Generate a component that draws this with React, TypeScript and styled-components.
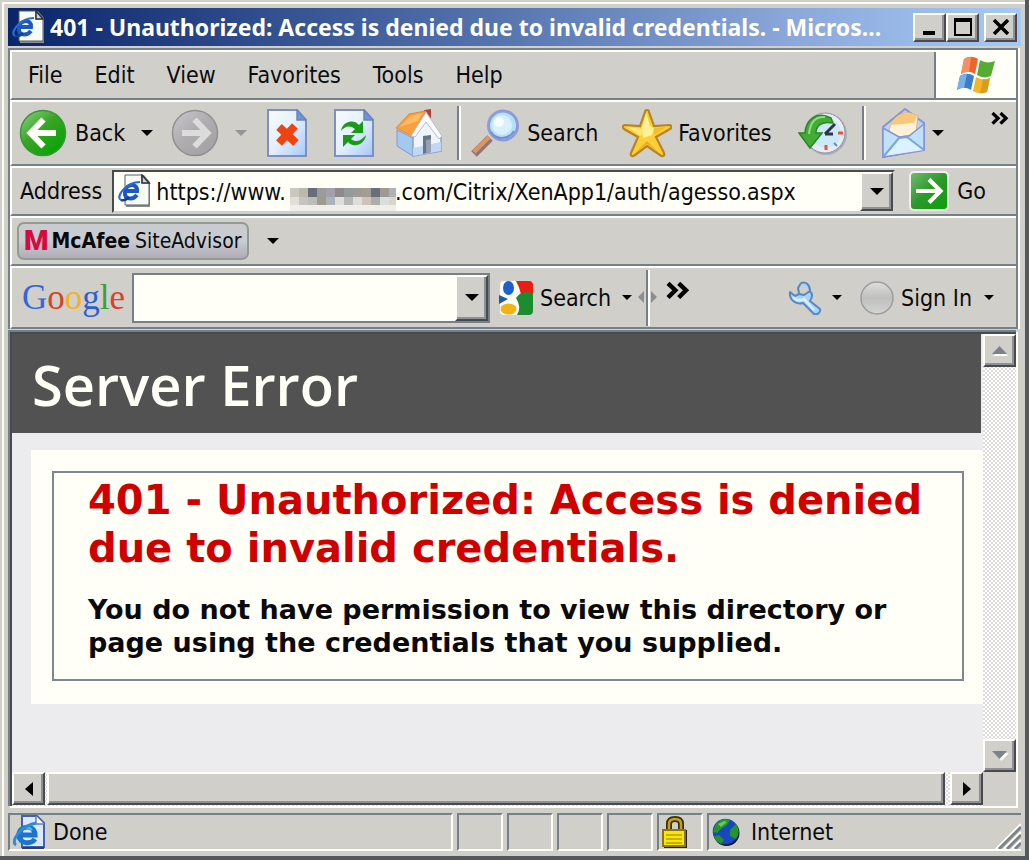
import React from "react";
import styled, { createGlobalStyle, css } from "styled-components";

const face = "#d1cfca";
const light = "#fffff8";
const shade = "#76808a";
const dark = "#484a4d";
const ui = `"DejaVu Sans Condensed", "DejaVu Sans", sans-serif`;
const verdana = `"DejaVu Sans", sans-serif`;

const Global = createGlobalStyle`
  *, *::before, *::after { box-sizing: border-box; }
  body { margin: 0; background: ${face}; }
  button, input { font: inherit; color: inherit; border: 0; padding: 0; background: none; border-radius: 0; }
  svg { display: block; flex: none; }
`;

const Window = styled.div`
  min-height: 100vh;
  display: flex;
  flex-direction: column;
  padding: 8px 8px 9px;
  background: ${face};
  box-shadow: inset -4px -4px 0 #54585c, inset 2px 2px 0 ${face}, inset 4px 4px 0 ${light};
  font: 23px/28px ${ui};
  color: #0a0a0c;
`;

const raised = css`
  background: ${face};
  border: 2px solid;
  border-color: ${light} ${dark} ${dark} ${light};
  box-shadow: inset -2px -2px 0 #8d9095;
`;

const TitleBar = styled.header`
  display: flex;
  align-items: center;
  height: 38px;
  padding: 0 4px;
  background: linear-gradient(90deg, #0a246a, #5574ae 48%, #8ca8dc 78%, #a6caf4);
`;

const TitleText = styled.h1`
  flex: 1;
  min-width: 0;
  margin: 0 0 0 5px;
  overflow: hidden;
  white-space: nowrap;
  font: bold 23px/34px "Noto Sans", sans-serif;
  color: ${light};
`;

const CaptionButton = styled.button<{ $apart?: boolean }>`
  ${raised}
  display: grid;
  place-items: center;
  flex: none;
  width: 33px;
  height: 29px;
  margin-left: ${(p) => (p.$apart ? 5 : 0)}px;
`;

const Rebar = styled.div`
  margin: 2px 3px 0 0;
  border: 2px solid ${shade};
  border-bottom: 0;
  box-shadow: 2px 0 0 ${light};
`;

const Band = styled.div<{ $h: number }>`
  display: flex;
  align-items: center;
  min-height: ${(p) => p.$h}px;
  border-top: 2px solid ${light};
  border-left: 2px solid ${light};
  border-bottom: 2px solid ${shade};
  white-space: nowrap;
`;

const MenuBand = styled(Band)`
  align-items: stretch;
`;

const MenuItem = styled.button`
  padding: 0 16px;
`;

const Throbber = styled.div`
  display: grid;
  place-items: center;
  width: 82px;
  margin-left: auto;
  background: ${light};
  border-left: 2px solid ${shade};
`;

const ToolButton = styled.button<{ $before?: number; $gap?: number }>`
  display: flex;
  align-items: center;
  flex: none;
  gap: ${(p) => p.$gap ?? 8}px;
  margin-left: ${(p) => p.$before ?? 0}px;
`;

const Divider = styled.span<{ $before: number }>`
  flex: none;
  width: 4px;
  height: 54px;
  margin-left: ${(p) => p.$before}px;
  border-left: 2px solid ${shade};
  border-right: 2px solid ${light};
`;

const Overflow = styled.button<{ $push?: boolean }>`
  align-self: flex-start;
  margin: ${(p) => (p.$push ? "10px 7px 0 auto" : "14px 0 0")};
`;

const AddressLabel = styled.label`
  margin: 0 10px 0 8px;
`;

const Combo = styled.div<{ $h: number }>`
  position: relative;
  display: flex;
  align-items: center;
  height: ${(p) => p.$h}px;
  background: ${light};
  border: 2px solid;
  border-color: ${dark} ${face} ${face} ${dark};
`;

const AddressCombo = styled(Combo)`
  flex: 1;
  padding-left: 4px;
`;

const SearchCombo = styled(Combo)`
  width: 358px;
  margin-left: 9px;
  border-color: ${shade};
`;

const ComboInput = styled.input`
  flex: 1;
  min-width: 0;
  height: 100%;
  margin-left: 5px;
  padding-top: 2px;
  outline: 0;
`;

const DropButton = styled.button`
  ${raised}
  display: grid;
  place-items: center;
  align-self: stretch;
  width: 33px;
`;

const Redaction = styled.svg`
  position: absolute;
  left: 176px;
  top: 16px;
`;

const SiteAdvisor = styled.button`
  display: flex;
  align-items: center;
  height: 38px;
  margin-left: 5px;
  padding: 0 6px 0 5px;
  border: 2px solid #929a94;
  border-radius: 7px;
  background: linear-gradient(#c8cccf, #c9ccd0 50%, #b0acb8);
  font: 21px/28px ${ui};
`;

const AdvisorMark = styled.span`
  font: 900 28px/30px Roboto, sans-serif;
  color: #d8093f;
`;

const AdvisorName = styled.strong`
  margin: 0 5px 0 3px;
  font: bold 21px/28px ${ui};
`;

const GoogleMark = styled.a`
  margin-left: 10px;
  width: 101px;
  font: 35px/44px "Liberation Serif", serif;
  text-decoration: none;
`;

const Tint = styled.span<{ $c: string }>`
  color: ${(p) => p.$c};
`;

const Spacer = styled.span<{ $w?: number }>`
  flex: ${(p) => (p.$w ? "none" : "1")};
  width: ${(p) => p.$w ?? 0}px;
`;

const Grip = styled.svg`
  margin: 0 9px 0 5px;
`;

const View = styled.main`
  flex: 1;
  display: grid;
  grid-template-columns: minmax(0, 1fr) 33px;
  grid-template-rows: 1fr 34px;
  margin: 1px 5px 0 0;
  border-top: 2px solid ${shade};
  border-left: 2px solid ${shade};
  box-shadow: inset 2px 2px 0 ${dark}, 2px 2px 0 ${light};
  padding: 2px 0 0 2px;
`;

const Page = styled.section`
  background: #ececee;
  font-family: ${verdana};
`;

const PageHeader = styled.div`
  margin-right: 2px;
  padding: 18px 20px 17px;
  background: #525252;
  color: ${light};
`;

const PageTitle = styled.h1`
  margin: 0;
  font: 600 56px/64px "Open Sans", sans-serif;
`;

const Panel = styled.div`
  margin: 17px 0 0 19px;
  padding: 21px 19px 23px 21px;
  background: ${light};
`;

const ErrorBox = styled.div`
  border: 2px solid #7d8891;
  padding: 3px 20px 20px 34px;
`;

const ErrorTitle = styled.h2`
  margin: 0;
  font: bold 40px/48px ${verdana};
  color: #d00000;
`;

const ErrorText = styled.h3`
  margin: 21px 0 0;
  font: bold 27px/33px ${verdana};
`;

const track = css`
  background: repeating-conic-gradient(${light} 0% 25%, #dcdce0 0% 50%) 0 0 / 4px 4px;
`;

const VScroll = styled.div`
  ${track}
  display: flex;
  flex-direction: column;
  justify-content: space-between;
`;

const HScroll = styled.div`
  ${track}
  display: flex;
  gap: 2px;
`;

const ScrollButton = styled.button`
  ${raised}
  display: grid;
  place-items: center;
  flex: none;
  width: 33px;
  height: 33px;
`;

const Thumb = styled.div`
  ${raised}
  flex: 1;
  height: 33px;
  margin-right: 3px;
`;

const StatusBar = styled.footer`
  display: flex;
  gap: 4px;
  height: 38px;
  margin-top: 7px;
`;

const StatusCell = styled.div<{ $w?: number; $grow?: number }>`
  display: flex;
  align-items: center;
  flex: ${(p) => (p.$grow ? `${p.$grow} 1 0` : "none")};
  width: ${(p) => (p.$w ? `${p.$w}px` : "auto")};
  padding-left: 3px;
  gap: 8px;
  border: 2px solid;
  border-color: ${shade} ${light} ${light} ${shade};
`;

const ZoneCell = styled(StatusCell)`
  flex: none;
  width: 314px;
  gap: 11px;
  border-right: 0;
`;

const ResizeGrip = styled.svg`
  margin-left: auto;
  align-self: flex-end;
`;

const Arrow = ({ w = 12, c = "#000" }: { w?: number; c?: string }) => (
  <svg width={w} height={w / 2} viewBox="0 0 12 6"><path d="M0 0h12L6 6z" fill={c} /></svg>
);

const Chevrons = ({ w = 18 }: { w?: number }) => (
  <svg width={w} height={w * 0.7} viewBox="0 0 18 12.6">
    <path d="M1.500 1l5.500 5.200L1.500 11.600M9.500 1l5.500 5.200-5.500 5.400" fill="none" stroke="#000" strokeWidth="3.300" />
  </svg>
);

const IePage = () => (
  <svg width="33" height="34" viewBox="0 0 33 34">
    <path d="M8 1h18l6 7v25H8z" fill="#8a8e90" />
    <path d="M7 1h17v8h7v22H7z" fill="#f8faf6" stroke="#55616a" strokeWidth="1" />
    <path d="M24 1l7 8h-7z" fill="#cfd4d4" stroke="#30363a" strokeWidth="1.600" />
    <path d="M7 17h12c1-8-11-8-12 1-1 8 8 8 12 3" fill="none" stroke="#1c58c4" strokeWidth="4" />
    <path d="M3 26c-6-3 5-18 19-18" fill="none" stroke="#2a6cd8" strokeWidth="2.200" />
    <path d="M3 26c3 1 7-1 8-3" fill="none" stroke="#143c90" strokeWidth="2.500" />
  </svg>
);

const IeStatus = () => (
  <svg width="32" height="34" viewBox="0 0 32 34">
    <path d="M9 1h15l7 7v24H9z" fill="#dce8fc" stroke="#4460a8" strokeWidth="2" />
    <path d="M23 1v8h8" fill="#fff" stroke="#5c7cc4" strokeWidth="1.500" />
    <path d="M9 33h22" stroke="#343c74" strokeWidth="2" />
    <path d="M6 20h16c0-11-16-10-16 0 0 10 13 9 16 4" fill="none" stroke="#1c74cc" strokeWidth="5" />
    <path d="M6 19c1-7 10-8 13-4" fill="none" stroke="#5cbcf4" strokeWidth="2" />
    <path d="M3 30C-3 26 8 11 23 8" fill="none" stroke="#2c8cdc" strokeWidth="3" />
  </svg>
);

const RoundArrow = ({ on }: { on?: boolean }) => {
  const id = on ? "goRound" : "offRound";
  return (
    <svg width="48" height="48" viewBox="0 0 48 48">
      <defs>
        <linearGradient id={id} x1="0.1" y1="0.1" x2="0.8" y2="0.9">
          <stop offset="0" stopColor={on ? "#7cc874" : "#c4c2c4"} />
          <stop offset="0.45" stopColor={on ? "#38a424" : "#b0aeb0"} />
          <stop offset="1" stopColor={on ? "#08a408" : "#a4a2a4"} />
        </linearGradient>
      </defs>
      <circle cx="24" cy="24" r="22.5" fill={`url(#${id})`} stroke={on ? "#3c9438" : "#918f93"} strokeWidth="1.5" />
      <g transform={on ? undefined : "matrix(-1 0 0 1 48 0)"} fill="none" stroke={on ? "#fffff8" : "#dddcdc"} strokeWidth="6">
        <path d="M24.500 10.500L11.500 24l13 13.500M12 24h25" />
      </g>
    </svg>
  );
};

const Sheet = ({ children }: { children: React.ReactNode }) => (
  <svg width="40" height="48" viewBox="0 0 40 48">
    <defs>
      <linearGradient id="sheet" x1="0" y1="0" x2="1" y2="1">
        <stop offset="0" stopColor="#f8fcff" /><stop offset="0.5" stopColor="#e4f0fc" /><stop offset="1" stopColor="#a4c8f8" />
      </linearGradient>
    </defs>
    <path d="M1 1h29l9 10v36H1z" fill="url(#sheet)" stroke="#7c90c4" strokeWidth="2" />
    <path d="M30 1v10h9z" fill="#6c94d8" stroke="#6c84bc" strokeWidth="1.5" />
    {children}
  </svg>
);

const Home = () => (
  <svg width="48" height="50" viewBox="0 0 48 50">
    <path d="M29 2l7-1v14l-7-6z" fill="#b83c34" />
    <path d="M2 22l16 8v18L2 38z" fill="#a4c8f0" stroke="#7c9cd0" />
    <path d="M18 27L32 11l14 18v14l-28 5z" fill="#f0f4fc" stroke="#8ca4d0" strokeWidth="1.5" />
    <path d="M18 40l28-6v9l-28 5z" fill="#c0d8f4" />
    <path d="M1 20L14 6l17-3-14 25z" fill="#f8a040" stroke="#e4883c" />
    <path d="M4 19L16 8l11-3-4 8z" fill="#fcbc64" />
    <path d="M31 4l16 24-3 3-13-17-11 15-4-1z" fill="#fafcfc" stroke="#b4bccc" />
    <path d="M28 28l8-1v17l-8 2z" fill="#66748c" /><path d="M31 32l5-1v13l-5 1z" fill="#96a0b0" />
  </svg>
);

const Magnifier = () => (
  <svg width="48" height="50" viewBox="0 0 48 50">
    <path d="M3 46L19 30" stroke="#8c7480" strokeWidth="8" />
    <path d="M3 44L18 29" stroke="#e0955c" strokeWidth="4.5" />
    <circle cx="32" cy="17.5" r="14.5" fill="#b4e0f8" stroke="#8c9cd8" strokeWidth="3" />
    <circle cx="31" cy="17" r="10" fill="#d8f0fc" /><circle cx="28" cy="14" r="5" fill="#f4fcff" />
    <path d="M20 24c5 8 18 8 23-1" fill="none" stroke="#7c8ad0" strokeWidth="2" />
  </svg>
);

const Star = () => (
  <svg width="50" height="50" viewBox="0 0 50 50">
    <path d="M25 2c1 0 2 1 2 2l5 14 15-1c3 0 3 3 1 4L34 29l8 16c1 3-1 4-4 2L25 38 13 47c-3 2-5 1-4-2l7-16L2 21c-2-2-1-4 1-4l15 1 5-14c0-1 1-2 2-2z" fill="#fbcf38" stroke="#b78524" strokeWidth="2.2" />
    <path d="M24 5l-4 15 1 10 9-3 2-7-4-2z" fill="#fff09a" /><path d="M25 33l11 11-11-8-11 8z" fill="#efaa1c" />
    <path d="M5 19l16 2-2 7z" fill="#fee878" /><path d="M32 20l12-1-12 8z" fill="#f6bc28" />
  </svg>
);

const History = () => (
  <svg width="50" height="48" viewBox="0 0 50 48">
    <circle cx="28" cy="25" r="21" fill="#a9afb9" /><circle cx="27" cy="24" r="20" fill="#e8ecf0" stroke="#8c98a8" />
    <circle cx="28" cy="24" r="15" fill="#cbe9fa" />
    <path d="M27 25l10-10M27 25h8" stroke="#303848" strokeWidth="3" />
    <path d="M28 36v5M40 24h5" stroke="#e8542c" strokeWidth="3" />
    <path d="M36 34l3 3" stroke="#7088a8" strokeWidth="2" />
    <path d="M33 9C19 2 8 10 7 24H1l11 15 12-15h-6c0-7 5-12 17-10z" fill="#42ac34" stroke="#2c8428" strokeWidth="1.5" />
    <path d="M27 8C17 7 12 14 11 25" fill="none" stroke="#90dc80" strokeWidth="2" />
  </svg>
);

const Mail = () => (
  <svg width="43" height="50" viewBox="0 0 43 50">
    <path d="M1 19L23 1l19 14v27L1 49z" fill="#b9d5f6" stroke="#8894d0" strokeWidth="2" />
    <path d="M7 22C11 8 22 0 36 8l-2 18-22 4z" fill="#fff0d8" stroke="#dcac74" />
    <path d="M8 17C14 6 24 2 35 8l-3 7z" fill="#f8c878" />
    <path d="M1 20l16 9 10-1 15-12v26L1 49z" fill="#bfe2fa" stroke="#8894d0" strokeWidth="1.5" />
    <path d="M2 48l15-18 8-1 17 13" fill="#dcf2ff" stroke="#7da4dc" strokeWidth="2" />
  </svg>
);

const Flag = () => (
  <svg width="40" height="38" viewBox="0 0 40 38">
    <path d="M8 3c5-3 9-3 14 0l-3 15c-5-3-9-3-14 0z" fill="#f0642c" /><path d="M8 3c3-2 5-2 7-2l-2 15c-3 0-5 0-8 2z" fill="#f49068" />
    <path d="M24 4c5 3 10 3 15 1l-4 15c-5 2-9 2-14-1z" fill="#54ac34" />
    <path d="M4 20c5-3 9-3 14 0l-3 14c-5-3-9-3-14 0z" fill="#3c7ccc" /><path d="M4 20c3-2 5-2 7-2L8 32c-3 0-5 0-7 2z" fill="#78b0e8" />
    <path d="M20 21c5 3 10 3 14 1l-3 14c-5 2-9 2-14-1z" fill="#f0b824" /><path d="M27 23c3 1 5 0 7-1l-3 14c-2 1-5 1-7 1z" fill="#d89c20" />
  </svg>
);

const GoIcon = () => (
  <svg width="40" height="40" viewBox="0 0 40 40">
    <defs><linearGradient id="go" x1="0" y1="0" x2="1" y2="1"><stop offset="0" stopColor="#74bc74" /><stop offset="0.5" stopColor="#2c982c" /><stop offset="1" stopColor="#08a008" /></linearGradient></defs>
    <rect x="1" y="1" width="38" height="38" rx="4" fill="url(#go)" stroke="#eef4ea" strokeWidth="2" />
    <path d="M7 20h24M20 8.500L31.500 20 20 31.500" fill="none" stroke={light} strokeWidth="4.2" />
  </svg>
);

const GoogleIcon = () => (
  <svg width="34" height="34" viewBox="0 0 34 34">
    <rect x="1" width="33" height="34" rx="4" fill="#fbfbf6" />
    <path d="M17 0h13q4 0 4 4v9H22Q20 5 17 0z" fill="#ec1c14" />
    <path d="M17 17q4-6 10-6l7 1v18q0 4-4 4H18q5-8-1-17z" fill="#1c8c30" />
    <path d="M0 14l9 4-9 5z" fill="#2454b0" />
    <ellipse cx="9.5" cy="7" rx="5.5" ry="7" fill="#1c60d0" />
    <ellipse cx="9.5" cy="28" rx="8" ry="5.5" fill="#f2b414" />
  </svg>
);

const Wrench = () => (
  <svg width="34" height="34" viewBox="0 0 34 34">
    <path d="M13 2l-3 5 1 6 5 1 6-4c3 3 2 7 0 10l10 8c1 4-3 6-6 5L15 22C8 24 1 19 2 11l5 4 4-2M13 2c5-2 9 2 9 8" fill="#a8d4f8" stroke="#5888c4" strokeWidth="2" strokeLinejoin="round" />
    <path d="M5 16c3 4 8 4 11 2l10 11" fill="none" stroke="#d8f0ff" strokeWidth="2.5" />
  </svg>
);

const Avatar = () => (
  <svg width="34" height="34" viewBox="0 0 34 34">
    <defs><linearGradient id="av" x1="0" y1="0" x2="0" y2="1"><stop offset="0" stopColor="#dededc" /><stop offset="0.5" stopColor="#bfc0be" /><stop offset="1" stopColor="#d4d5d2" /></linearGradient></defs>
    <circle cx="17" cy="17" r="16" fill="url(#av)" stroke="#9b9c9e" strokeWidth="1.5" />
  </svg>
);

const Lock = () => (
  <svg width="26" height="32" viewBox="0 0 26 32">
    <path d="M7 15V8q0-5 6-5t6 5v7" fill="none" stroke="#3b3008" strokeWidth="6" />
    <path d="M7 15V8q0-5 6-5t6 5v7" fill="none" stroke="#c4a020" strokeWidth="2.5" />
    <rect x="2" y="14" width="23" height="18" fill="#282004" /><rect x="1" y="14" width="22" height="16" fill="#f8e800" stroke="#8c7410" strokeWidth="2" />
    <path d="M4 19h16M4 23h16M4 27h16" stroke="#b89c10" strokeWidth="1.5" />
  </svg>
);

const Globe = () => (
  <svg width="28" height="28" viewBox="0 0 28 28">
    <circle cx="14.5" cy="15" r="13" fill="#10183c" /><circle cx="13.5" cy="13.5" r="12.8" fill="#1848c0" />
    <path d="M3 8C7 1 13 0 18 2l-3 5-6 4-4 4-4-1zM18 12l6-6c4 5 3 11 0 15l-6-3zM2 18l5-1 5 5-3 4c-4-2-6-4-7-8z" fill="#24942c" />
    <path d="M6 6l6-3 3 1-6 5z" fill="#68c85c" />
  </svg>
);

const mosaic = ["#c9c7be", "#bbb8ae", "#696d7b", "#9b9b9b", "#a5a0ae", "#8e8a8c", "#969a9c", "#9d9b93", "#a39c94", "#696f7a", "#9e9a91", "#acb3b6"];
const mosaicLow = ["#e1e0d8", "#c5c4c1", "#bcbcba", "#9e9c88", "#acb3bd", "#dedfd8", "#b5b8b8", "#dddeda", "#cfc2ba", "#acaead", "#d9dfdc", "#dbd5cb"];

const menus = ["File", "Edit", "View", "Favorites", "Tools", "Help"];
const url = "https://www." + "\u00a0".repeat(16) + "\u2009.com/Citrix/XenApp1/auth/agesso.aspx";

export default function App() {
  return (
    <>
      <Global />
      <Window>
        <TitleBar>
          <IePage />
          <TitleText>401 - Unauthorized: Access is denied due to invalid credentials. - Micros...</TitleText>
          <CaptionButton aria-label="Minimize">
            <svg width="18" height="18" viewBox="0 0 18 18"><path d="M2 13h12v4H2z" /></svg>
          </CaptionButton>
          <CaptionButton aria-label="Maximize">
            <svg width="20" height="20" viewBox="0 0 20 20"><path d="M2 3h16v15H2z" fill="none" stroke="#000" strokeWidth="2" /><path d="M1 1h18v4H1z" /></svg>
          </CaptionButton>
          <CaptionButton $apart aria-label="Close">
            <svg width="18" height="16" viewBox="0 0 18 16"><path d="M2 1l14 14M16 1L2 15" stroke="#000" strokeWidth="3.5" /></svg>
          </CaptionButton>
        </TitleBar>

        <Rebar>
          <MenuBand as="nav" $h={50}>
            {menus.map((m) => <MenuItem key={m}>{m}</MenuItem>)}
            <Throbber><Flag /></Throbber>
          </MenuBand>

          <Band $h={66}>
            <ToolButton $before={7}><RoundArrow on />Back</ToolButton>
            <ToolButton $before={16} aria-label="Back history"><Arrow /></ToolButton>
            <ToolButton $before={18} aria-label="Forward"><RoundArrow /></ToolButton>
            <ToolButton $before={16} aria-label="Forward history"><Arrow c="#94979a" /></ToolButton>
            <ToolButton $before={20} aria-label="Stop">
              <Sheet><path d="M12 18l17 16M28 17L12 34" stroke="#f04410" strokeWidth="8" /></Sheet>
            </ToolButton>
            <ToolButton $before={27} aria-label="Refresh">
              <Sheet>
                <path d="M7 22c1-9 12-13 18-6l4-4v12H17l4-4c-5-4-10-3-14 2z" fill="#189c18" />
                <path d="M32 26c-1 9-12 14-18 7l-5 5V26h12l-4 4c5 4 10 2 15-4z" fill="#189c18" />
              </Sheet>
            </ToolButton>
            <ToolButton $before={21} aria-label="Home"><Home /></ToolButton>
            <Divider $before={14} />
            <ToolButton $before={10}><Magnifier />Search</ToolButton>
            <ToolButton $before={24} $gap={6}><Star />Favorites</ToolButton>
            <ToolButton $before={26} aria-label="History"><History /></ToolButton>
            <Divider $before={14} />
            <ToolButton $before={16} $gap={7} aria-label="Mail"><Mail /><Arrow /></ToolButton>
            <Overflow $push aria-label="More buttons"><Chevrons /></Overflow>
          </Band>

          <Band $h={50}>
            <AddressLabel htmlFor="address">Address</AddressLabel>
            <AddressCombo $h={43}>
              <IePage />
              <ComboInput id="address" defaultValue={url} />
              <Redaction width="106" height="24" viewBox="0 0 106 24">
                {mosaic.map((c, i) => <rect key={i} x={i * 9} y="0" width="9" height="9" fill={c} />)}
                {mosaicLow.map((c, i) => <rect key={i} x={i * 9} y="9" width="9" height="8" fill={c} />)}
                <rect y="17" width="106" height="6" fill="#efefe8" />
              </Redaction>
              <DropButton aria-label="Show addresses"><Arrow w={14} /></DropButton>
            </AddressCombo>
            <ToolButton $before={14}><GoIcon />Go</ToolButton>
            <Spacer $w={30} />
          </Band>

          <Band $h={50}>
            <SiteAdvisor>
              <AdvisorMark>M</AdvisorMark><AdvisorName>McAfee</AdvisorName>SiteAdvisor
            </SiteAdvisor>
            <ToolButton $before={18} aria-label="SiteAdvisor menu"><Arrow /></ToolButton>
          </Band>

          <Band $h={63}>
            <GoogleMark href="#" aria-label="Google">
              <Tint $c="#3468d8">G</Tint><Tint $c="#d8402c">o</Tint><Tint $c="#f0b41c">o</Tint><Tint $c="#2c60d0">g</Tint><Tint $c="#38a03c">l</Tint><Tint $c="#dc402c">e</Tint>
            </GoogleMark>
            <SearchCombo $h={50}>
              <ComboInput aria-label="Google search" />
              <DropButton aria-label="Search history"><Arrow w={14} /></DropButton>
            </SearchCombo>
            <ToolButton $before={9} $gap={7}><GoogleIcon />Search</ToolButton>
            <ToolButton $before={11} aria-label="Search options"><Arrow w={10} /></ToolButton>
            <Grip width="20" height="56" viewBox="0 0 20 56">
              <path d="M9 0h2v56H9z" fill={shade} /><path d="M11 0h2v56h-2z" fill={light} />
              <path d="M7 21v12l-6-6zM14 21v12l6-6z" fill="#8b8e91" />
            </Grip>
            <Overflow aria-label="More tools"><Chevrons w={24} /></Overflow>
            <Spacer />
            <ToolButton $gap={10} aria-label="Settings"><Wrench /><Arrow w={10} /></ToolButton>
            <ToolButton $before={18} $gap={7}><Avatar />Sign In</ToolButton>
            <ToolButton $before={12} aria-label="Account menu"><Arrow w={10} /></ToolButton>
            <Spacer $w={22} />
          </Band>
        </Rebar>

        <View>
          <Page>
            <PageHeader><PageTitle>Server Error</PageTitle></PageHeader>
            <Panel>
              <ErrorBox>
                <ErrorTitle>401 - Unauthorized: Access is denied due to invalid credentials.</ErrorTitle>
                <ErrorText>You do not have permission to view this directory or page using the credentials that you supplied.</ErrorText>
              </ErrorBox>
            </Panel>
          </Page>
          <VScroll>
            <ScrollButton aria-label="Scroll up">
              <svg width="18" height="10" viewBox="0 0 18 10"><path d="M2 10h15L10 3z" fill={light} /><path d="M1 8h15L8.500 0z" fill="#7c848a" /></svg>
            </ScrollButton>
            <ScrollButton aria-label="Scroll down">
              <svg width="18" height="10" viewBox="0 0 18 10"><path d="M3 2h15l-7.500 8z" fill={light} /><path d="M1 0h15L8.500 8z" fill="#7c848a" /></svg>
            </ScrollButton>
          </VScroll>
          <HScroll>
            <ScrollButton aria-label="Scroll left"><svg width="8" height="14" viewBox="0 0 8 14"><path d="M8 0v14L0 7z" /></svg></ScrollButton>
            <Thumb />
            <ScrollButton aria-label="Scroll right"><svg width="8" height="14" viewBox="0 0 8 14"><path d="M0 0v14l8-7z" /></svg></ScrollButton>
          </HScroll>
        </View>

        <StatusBar>
          <StatusCell $grow={1}><IeStatus />Done</StatusCell>
          <StatusCell $w={46} /><StatusCell $w={46} /><StatusCell $w={46} /><StatusCell $w={46} />
          <StatusCell $w={46}><Lock /></StatusCell>
          <ZoneCell>
            <Globe />Internet
            <ResizeGrip width="26" height="26" viewBox="0 0 26 26">
              <path d="M1 26L26 1M9 26L26 9M17 26l9-9" stroke={light} strokeWidth="2" />
              <path d="M4 26L26 4M12 26l14-14M20 26l6-6" stroke="#7c848a" strokeWidth="3" />
            </ResizeGrip>
          </ZoneCell>
        </StatusBar>
      </Window>
    </>
  );
}
